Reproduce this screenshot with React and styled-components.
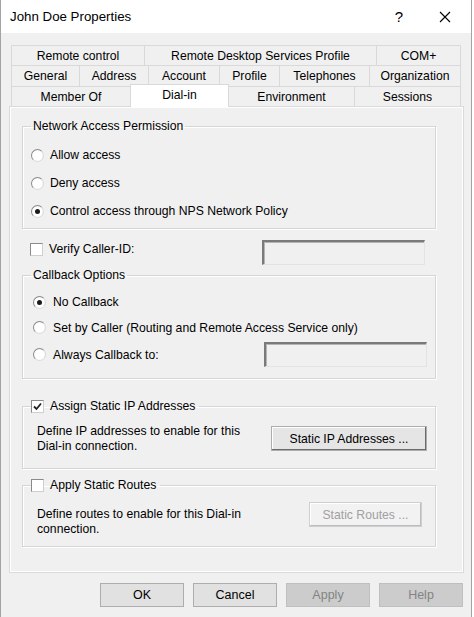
import React from 'react';
import styled, { createGlobalStyle } from 'styled-components';

const GlobalStyle = createGlobalStyle`
  body {
    margin: 0;
    background: #ffffff;
    font-family: "Liberation Sans", Arial, sans-serif;
    font-size: 12.2px;
    color: #000;
  }
`;

const Window = styled.div`
  width: 472px;
  height: 617px;
  box-sizing: border-box;
  background: #f0f0f0;
  border-left: 1px solid #a3a3a3;
  border-right: 1px solid #a3a3a3;
  display: flex;
  flex-direction: column;
`;

const TitleBar = styled.div`
  height: 33px;
  background: #ffffff;
  display: flex;
  align-items: center;
  padding-left: 9px;
  font-size: 13.3px;
`;

const TitleText = styled.span`
  flex: 1;
`;

const TitleButton = styled.div`
  width: 46px;
  height: 33px;
  display: flex;
  align-items: center;
  justify-content: center;
  font-size: 15px;
  margin-right: ${p => p.$mr || 0}px;
`;

const Body = styled.div`
  padding: 12px 0 0 8px;
  display: flex;
  flex-direction: column;
`;

const TabRow = styled.div`
  display: flex;
  height: ${p => p.$h}px;
  margin-left: 2px;
`;

const Tab = styled.div`
  width: ${p => p.$w}px;
  box-sizing: border-box;
  border: 1px solid #d9d9d9;
  border-bottom: none;
  margin-right: -1px;
  background: #f0f0f0;
  display: flex;
  align-items: center;
  justify-content: center;
  height: 100%;
`;

const ActiveTab = styled(Tab)`
  position: relative;
  z-index: 1;
  background: #ffffff;
  margin-top: -2px;
  height: calc(100% + 3px);
  padding-bottom: 3px;
`;

const Panel = styled.div`
  width: 455px;
  height: 467px;
  box-sizing: border-box;
  border: 1px solid #dadada;
  box-shadow: inset 1px 1px 0 #ffffff, inset -1px -1px 0 #ffffff;
  padding: 12px 0 0 12px;
  display: flex;
  flex-direction: column;
  align-items: flex-start;
`;

const Group = styled.fieldset`
  margin: ${p => p.$mt || 0}px 0 0 0;
  padding: ${p => p.$pad};
  width: 414px;
  box-sizing: border-box;
  min-width: 0;
  border: 1px solid #d5d5d5;
  box-shadow: inset 1px 1px 0 #ffffff, 1px 1px 0 #ffffff;
`;

const Legend = styled.legend`
  padding: 0 2px;
  margin-left: ${p => p.$ml || 0}px;
  line-height: 14px;
  height: 14px;
`;

const CheckLegend = styled.legend`
  padding: 0 4px 0 0;
  margin-left: ${p => p.$ml || 0}px;
  height: 16px;
  display: flex;
  align-items: center;
  gap: 6px;
  line-height: 16px;
`;

const OptionRow = styled.div`
  height: ${p => p.$h}px;
  display: flex;
  align-items: center;
  gap: ${p => p.$gap || 6}px;
`;

const Radio = styled.span`
  width: 13px;
  height: 13px;
  box-sizing: border-box;
  border-radius: 50%;
  border: 1px solid #8a8a8a;
  border-right-color: #d8d8d8;
  border-bottom-color: #dcdcdc;
  background: radial-gradient(circle at 50% 50%, #ffffff 55%, #e8e8e8 100%);
  display: flex;
  align-items: center;
  justify-content: center;
  flex-shrink: 0;

  &::after {
    content: '';
    width: 5px;
    height: 5px;
    border-radius: 50%;
    background: ${p => (p.$checked ? '#1a1a1a' : 'transparent')};
  }
`;

const Box = styled.span`
  width: 13px;
  height: 13px;
  box-sizing: border-box;
  border: 1px solid #8a8a8a;
  border-right-color: #cfcfcf;
  border-bottom-color: #cfcfcf;
  background: #ffffff;
  display: flex;
  align-items: center;
  justify-content: center;
  flex-shrink: 0;
`;

const CheckRow = styled.div`
  width: 414px;
  height: 25px;
  margin-top: 11px;
  box-sizing: border-box;
  padding-left: 8px;
  display: flex;
  align-items: flex-start;
`;

const CheckLabel = styled.div`
  display: flex;
  align-items: center;
  gap: 6px;
  height: 16px;
  margin-top: 1px;
`;

const TextBox = styled.div`
  width: 163px;
  height: 25px;
  box-sizing: border-box;
  margin-left: auto;
  margin-right: ${p => p.$mr}px;
  background: #f0f0f0;
  border: 2px solid #7a7a7a;
  border-right: 1px solid #e3e3e3;
  border-bottom: 1px solid #e3e3e3;
  box-shadow: inset 1px 1px 0 #b4b4b4;
`;

const InfoRow = styled.div`
  display: flex;
  align-items: flex-start;
`;

const InfoText = styled.div`
  width: 234px;
  line-height: 15px;
  margin-top: ${p => p.$mt || 0}px;
`;

const ActionButton = styled.div`
  width: ${p => p.$w}px;
  height: 25px;
  box-sizing: border-box;
  margin-left: auto;
  margin-right: ${p => p.$mr}px;
  margin-top: ${p => p.$mt || 0}px;
  display: flex;
  align-items: center;
  justify-content: center;
  background: ${p => (p.$disabled ? '#f2f2f2' : '#e5e5e5')};
  color: ${p => (p.$disabled ? '#a0a0a0' : '#000')};
  border: 1px solid ${p => (p.$disabled ? '#cfcfcf' : '#adadad')};
  box-shadow: ${p =>
    p.$disabled
      ? 'inset -1px -1px 0 #bdbdbd, inset 1px 1px 0 #ffffff'
      : 'inset -1px -1px 0 #6a6a6a, inset 1px 1px 0 #ffffff'};
`;

const Footer = styled.div`
  display: flex;
  gap: 9px;
  margin: 10px 0 0 91px;
`;

const FooterButton = styled.div`
  width: 84px;
  height: 24px;
  box-sizing: border-box;
  display: flex;
  align-items: center;
  justify-content: center;
  font-size: 12.5px;
  background: ${p => (p.$disabled ? '#cccccc' : '#e1e1e1')};
  color: ${p => (p.$disabled ? '#838383' : '#000')};
  border: 1px solid ${p => (p.$disabled ? '#bfbfbf' : '#adadad')};
`;

const Check = () => (
  <svg width="9" height="9" viewBox="0 0 9 9">
    <path d="M1 4.5 L3.5 7 L8 1.5" fill="none" stroke="#222" strokeWidth="1.8" />
  </svg>
);

const CloseIcon = () => (
  <svg width="12" height="12" viewBox="0 0 12 12">
    <path d="M1 1 L11 11 M11 1 L1 11" stroke="#000" strokeWidth="1.1" />
  </svg>
);

const tabRows = [
  { h: 20, tabs: [['Remote control', 134], ['Remote Desktop Services Profile', 233], ['COM+', 85]] },
  {
    h: 21,
    tabs: [
      ['General', 69],
      ['Address', 70],
      ['Account', 72],
      ['Profile', 61],
      ['Telephones', 91],
      ['Organization', 92],
    ],
  },
  { h: 20, tabs: [['Member Of', 120], ['Dial-in', 99, true], ['Environment', 127], ['Sessions', 107]] },
];

const RadioOption = ({ h, gap, checked, children }) => (
  <OptionRow $h={h} $gap={gap}>
    <Radio $checked={checked} />
    <span>{children}</span>
  </OptionRow>
);

export default function App() {
  return (
    <>
      <GlobalStyle />
      <Window>
        <TitleBar>
          <TitleText>John Doe Properties</TitleText>
          <TitleButton>?</TitleButton>
          <TitleButton $mr={3}>
            <CloseIcon />
          </TitleButton>
        </TitleBar>
        <Body>
          {tabRows.map((row, i) => (
            <TabRow key={i} $h={row.h}>
              {row.tabs.map(([label, w, active]) =>
                active ? (
                  <ActiveTab key={label} $w={w}>
                    {label}
                  </ActiveTab>
                ) : (
                  <Tab key={label} $w={w}>
                    {label}
                  </Tab>
                )
              )}
            </TabRow>
          ))}
          <Panel>
            <Group $pad="8px 0 3px 8px">
              <Legend>Network Access Permission</Legend>
              <RadioOption h={28}>Allow access</RadioOption>
              <RadioOption h={28}>Deny access</RadioOption>
              <RadioOption h={28} checked>
                Control access through NPS Network Policy
              </RadioOption>
            </Group>

            <CheckRow>
              <CheckLabel>
                <Box />
                <span>Verify Caller-ID:</span>
              </CheckLabel>
              <TextBox $mr={11} />
            </CheckRow>

            <Group $mt={3} $pad="7px 0 9px 10px">
              <Legend $ml={-2}>Callback Options</Legend>
              <RadioOption h={26} gap={7} checked>
                No Callback
              </RadioOption>
              <RadioOption h={25} gap={7}>
                Set by Caller (Routing and Remote Access Service only)
              </RadioOption>
              <OptionRow $h={29} $gap={7}>
                <Radio />
                <span>Always Callback to:</span>
                <TextBox $mr={8} />
              </OptionRow>
            </Group>

            <Group $mt={19} $pad="10px 0 14px 14px">
              <CheckLegend $ml={-6}>
                <Box>
                  <Check />
                </Box>
                <span>Assign Static IP Addresses</span>
              </CheckLegend>
              <InfoRow>
                <InfoText>
                  Define IP addresses to enable for this
                  <br />
                  Dial-in connection.
                </InfoText>
                <ActionButton $w={156} $mr={8} $mt={2}>
                  Static IP Addresses ...
                </ActionButton>
              </InfoRow>
            </Group>

            <Group $mt={8} $pad="9px 0 9px 14px">
              <CheckLegend $ml={-6}>
                <Box />
                <span>Apply Static Routes</span>
              </CheckLegend>
              <InfoRow>
                <InfoText $mt={5}>
                  Define routes to enable for this Dial-in
                  <br />
                  connection.
                </InfoText>
                <ActionButton $w={113} $mr={13} $disabled>
                  Static Routes ...
                </ActionButton>
              </InfoRow>
            </Group>
          </Panel>
          <Footer>
            <FooterButton>OK</FooterButton>
            <FooterButton>Cancel</FooterButton>
            <FooterButton $disabled>Apply</FooterButton>
            <FooterButton $disabled>Help</FooterButton>
          </Footer>
        </Body>
      </Window>
    </>
  );
}
